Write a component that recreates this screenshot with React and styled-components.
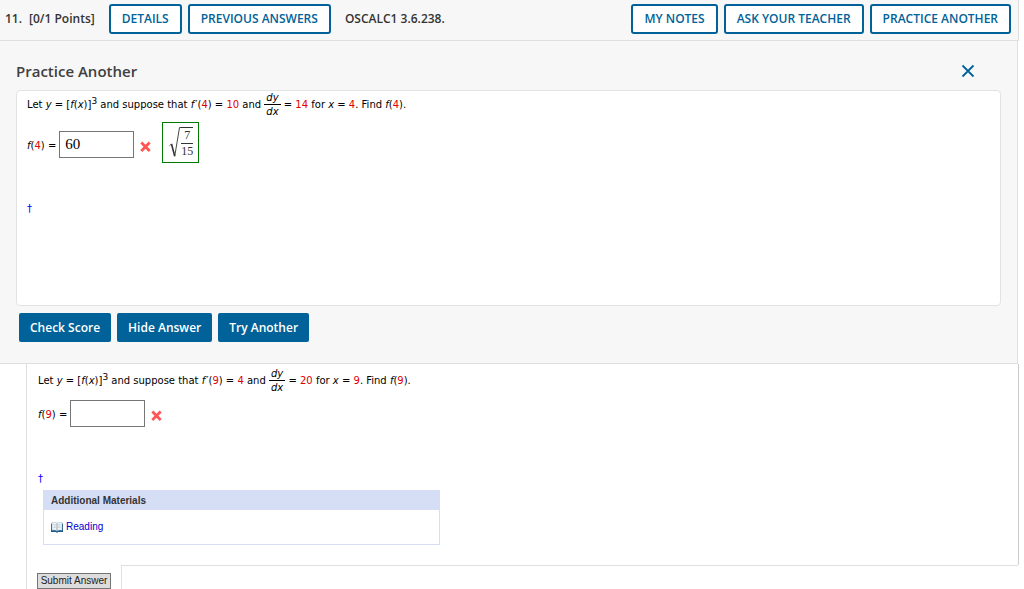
import styled, { createGlobalStyle } from "styled-components";

const GlobalStyle = createGlobalStyle`
    * {
        box-sizing: border-box;
    }

    body {
        margin: 0;
        background: #fff;
        color: #000;
        font-family: "DejaVu Sans", Verdana, sans-serif;
        font-size: 10px;
        line-height: 16px;
        overflow: hidden;
    }

    button, input {
        font: inherit;
        margin: 0;
    }

    a {
        color: #00c;
        text-decoration: none;
    }
`;

const Page = styled.div`
    padding-right: 5px;
`;

const Header = styled.header`
    display: flex;
    align-items: center;
    gap: 6px;
    height: 41px;
    padding: 0 7px 3px 5px;
    border: solid #dfdfdf;
    border-width: 0 1px 1px 0;
    background: #f7f7f7;
    color: #333;
    font-family: "Open Sans", sans-serif;
    font-size: 12px;
    font-weight: 600;
    white-space: nowrap;
`;

const QuestionNumber = styled.span`
    margin-right: 1px;
`;

const Points = styled.span`
    margin-right: 8px;
`;

const Source = styled.span`
    margin: 0 auto 0 8px;
`;

const OutlineButton = styled.button`
    height: 30px;
    padding: 0 11px;
    border: 2px solid #006298;
    border-radius: 3px;
    background: #fff;
    color: #006298;
    font-size: 12px;
    font-weight: 600;
`;

const Practice = styled.section`
    margin-right: 1px;
    padding: 17px 16px 21px;
    border: solid #dfdfdf;
    border-width: 0 1px 1px 0;
    background: #f7f7f7;
    font-family: "Open Sans", sans-serif;
`;

const PracticeHead = styled.div`
    display: flex;
    align-items: center;
    justify-content: space-between;
    height: 25px;
    margin-bottom: 7px;
    padding-right: 26px;
`;

const PracticeTitle = styled.h2`
    margin: 0;
    color: #404040;
    font-size: 15px;
    font-weight: 600;
`;

const CloseButton = styled.button`
    display: flex;
    padding: 0;
    border: 0;
    background: none;
    color: #006298;
`;

const Card = styled.div`
    padding: 0 10px 88px;
    border: 1px solid #e3e3e3;
    border-radius: 4px;
    background: #fff;
    font-family: "DejaVu Sans", Verdana, sans-serif;
`;

const Actions = styled.div`
    display: flex;
    gap: 6px;
    padding: 7px 3px 0;
`;

const SolidButton = styled.button`
    height: 29px;
    padding: 0 11px;
    border: 0;
    border-radius: 2px;
    background: #006298;
    color: #fff;
    font-size: 12px;
    font-weight: 600;
`;

const Prompt = styled.p`
    margin: 0;
    white-space: nowrap;

    sup {
        font-size: 9px;
        line-height: 1;
        vertical-align: 4px;
    }
`;

const Value = styled.span`
    color: #e00000;
`;

const Fraction = styled.span`
    display: inline-flex;
    flex-direction: column;
    text-align: center;
    font-style: italic;
    line-height: 13px;
    vertical-align: middle;
`;

const Numerator = styled.span`
    border-bottom: 1px solid #000;
    padding: 0 2px;
`;

const AnswerRow = styled.div`
    display: flex;
    align-items: center;
    min-height: 39px;
    margin-top: ${props => props.$top}px;

    label, svg[role="img"] {
        margin-top: 3px;
    }
`;

const AnswerInput = styled.input`
    width: 75px;
    height: 27px;
    margin: 0 6px 0 3px;
    padding: 0 5px;
    border: 1px solid #767676;
    background: #fff;
    font-family: "Liberation Serif", serif;
    font-size: 15px;
`;

const AnswerKey = styled.div`
    display: flex;
    height: 41px;
    margin: 0 0 4px 11px;
    padding: 4px 5px;
    border: 1px solid #007a00;
    color: #333;
    font-family: "Liberation Serif", serif;
    font-size: 12px;
    line-height: 15px;
`;

const Radicand = styled.div`
    display: flex;
    flex-direction: column;
    height: 31px;
    border-top: 1px solid #333;
    text-align: center;
`;

const RadicandTop = styled.span`
    border-bottom: 1px solid #333;
`;

const Dagger = styled.a`
    display: block;
    width: 8px;
    margin-top: ${props => props.$top}px;
    color: #00f;
`;

const Question = styled.section`
    margin-left: 26px;
    border-left: 1px solid #dfdfdf;
`;

const QuestionBody = styled.div`
    padding: 3px 11px 21px;
    border-right: 1px solid #ccc;
    border-bottom-right-radius: 3px;
`;

const Materials = styled.section`
    width: 397px;
    margin: 3px 0 0 5px;
    border: 1px solid #d6def5;
    font-family: "Liberation Sans", Arial, sans-serif;
`;

const MaterialsTitle = styled.h3`
    margin: 0;
    padding: 2px 7px 1px;
    background: #d6def5;
    color: #333;
    font-size: 10px;
    line-height: 16px;
`;

const MaterialsLink = styled.a`
    display: flex;
    align-items: center;
    gap: 3px;
    padding: 9px 7px;
    color: #00c;
`;

const SubmitRow = styled.div`
    display: flex;
`;

const SubmitCell = styled.div`
    flex: none;
    width: 94px;
    padding: 7px 10px 0;
`;

const SubmitButton = styled.button`
    height: 16px;
    width: 74px;
    padding: 0;
    border: 1px solid #767676;
    background: #ddd;
    color: #222;
    font-family: "Liberation Sans", Arial, sans-serif;
    font-size: 10px;
    line-height: 14px;
`;

const SubmitRest = styled.div`
    flex: 1;
    min-height: 40px;
    border: solid #dfdfdf;
    border-width: 1px 0 0 1px;
    margin-top: -1px;
    margin-right: 2px;
`;

function CloseIcon() {
    return (
        <svg width="14" height="14" viewBox="0 0 14 14" fill="none" stroke="currentColor" strokeWidth="1.8">
            <path d="M1.5 1.5l11 11M12.5 1.5l-11 11"/>
        </svg>
    );
}

function WrongIcon() {
    return (
        <svg width="11" height="11" viewBox="0 0 11 11" role="img" aria-label="Incorrect">
            <path d="M2.3 2.5l6.4 6.5M8.7 2.5l-6.4 6.5" stroke="#f55" strokeWidth="2.8" strokeLinecap="square"/>
        </svg>
    );
}

function RadicalIcon() {
    return (
        <svg width="13" height="31" viewBox="0 0 13 31" fill="none" stroke="#333">
            <path d="M1.5 18.5l2-1.5" strokeWidth="0.8"/>
            <path d="M3.5 17l3.2 12" strokeWidth="1.6"/>
            <path d="M6.7 29.5L11.5 0.5H13" strokeWidth="0.9"/>
        </svg>
    );
}

function BookIcon() {
    return (
        <svg width="12" height="11" viewBox="0 0 12 11">
            <path d="M0 1.5h12V10H7l-1 1-1-1H0z" fill="#1f5c8c"/>
            <path d="M1 0.5C3 0 5 0.3 6 1.2 7 0.3 9 0 11 0.5V8.3C9 7.9 7 8.1 6 9 5 8.1 3 7.9 1 8.3z" fill="#f2f5f7" stroke="#8fb0c8" strokeWidth="0.5"/>
            <path d="M6 1.5v7" stroke="#7796ad" strokeWidth="0.8"/>
            <path d="M2.5 2.5h2.3M2.5 4h2.3M2.5 5.5h2.3M7.2 2.5h2.3M7.2 4h2.3M7.2 5.5h2.3" stroke="#b4bcc4" strokeWidth="0.6"/>
        </svg>
    );
}

function QuestionPrompt(props) {
    return (
        <Prompt>
            Let <i>y</i> = [<i>f</i>(<i>x</i>)]<sup>3</sup> and suppose that <i>f</i>&#8202;′(<Value>{props.x}</Value>) = <Value>{props.slope}</Value> and{" "}
            <Fraction>
                <Numerator>dy</Numerator>
                <span>dx</span>
            </Fraction>
            {" "}= <Value>{props.rate}</Value> for <i>x</i> = <Value>{props.x}</Value>. Find <i>f</i>(<Value>{props.x}</Value>).
        </Prompt>
    );
}

function Answer(props) {
    return (
        <AnswerRow $top={props.top}>
            <label htmlFor={props.id}><i>f</i>(<Value>{props.x}</Value>) =</label>
            <AnswerInput id={props.id} defaultValue={props.value}/>
            <WrongIcon/>
            {props.children}
        </AnswerRow>
    );
}

function App() {
    return (
        <Page>
            <GlobalStyle/>
            <Header>
                <QuestionNumber>11.</QuestionNumber>
                <Points>[0/1 Points]</Points>
                <OutlineButton>DETAILS</OutlineButton>
                <OutlineButton>PREVIOUS ANSWERS</OutlineButton>
                <Source>OSCALC1 3.6.238.</Source>
                <OutlineButton>MY NOTES</OutlineButton>
                <OutlineButton>ASK YOUR TEACHER</OutlineButton>
                <OutlineButton>PRACTICE ANOTHER</OutlineButton>
            </Header>
            <Practice>
                <PracticeHead>
                    <PracticeTitle>Practice Another</PracticeTitle>
                    <CloseButton aria-label="Close"><CloseIcon/></CloseButton>
                </PracticeHead>
                <Card>
                    <QuestionPrompt x="4" slope="10" rate="14"/>
                    <Answer id="practice-answer" x="4" value="60" top={4}>
                        <AnswerKey>
                            <RadicalIcon/>
                            <Radicand>
                                <RadicandTop>7</RadicandTop>
                                <span>15</span>
                            </Radicand>
                        </AnswerKey>
                    </Answer>
                    <Dagger href="#practice-answer" $top={34}>†</Dagger>
                </Card>
                <Actions>
                    <SolidButton>Check Score</SolidButton>
                    <SolidButton>Hide Answer</SolidButton>
                    <SolidButton>Try Another</SolidButton>
                </Actions>
            </Practice>
            <Question>
                <QuestionBody>
                    <QuestionPrompt x="9" slope="4" rate="20"/>
                    <Answer id="answer" x="9" value="" top={0}/>
                    <Dagger href="#answer" $top={38}>†</Dagger>
                    <Materials>
                        <MaterialsTitle>Additional Materials</MaterialsTitle>
                        <MaterialsLink href="#reading"><BookIcon/>Reading</MaterialsLink>
                    </Materials>
                </QuestionBody>
                <SubmitRow>
                    <SubmitCell><SubmitButton>Submit Answer</SubmitButton></SubmitCell>
                    <SubmitRest/>
                </SubmitRow>
            </Question>
        </Page>
    );
}

export default App;
